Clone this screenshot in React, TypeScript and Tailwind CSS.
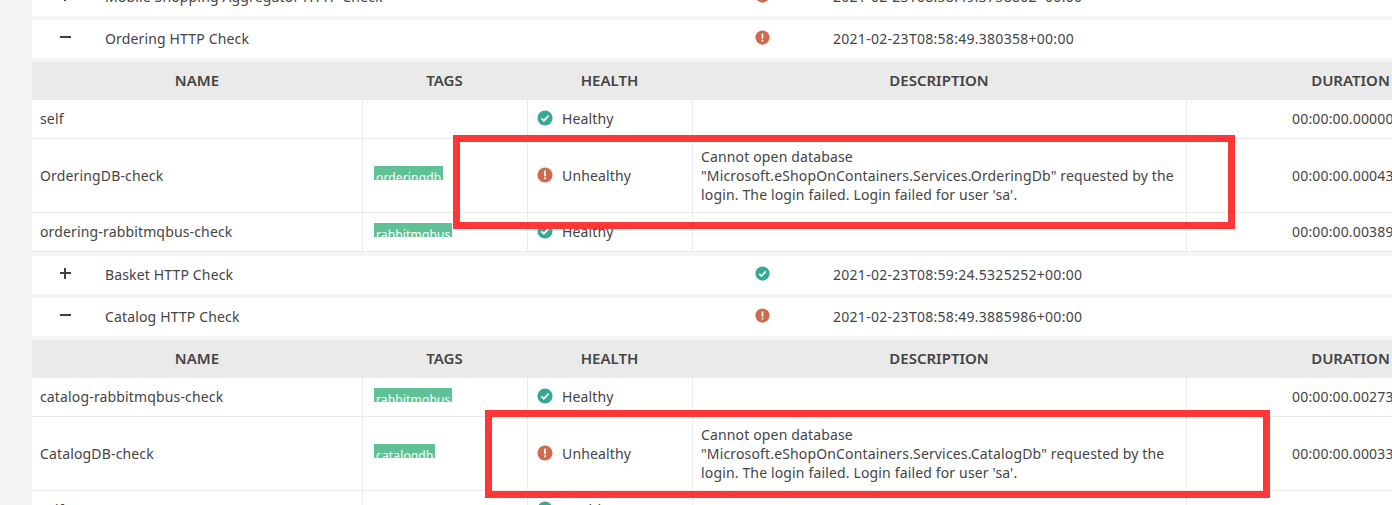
function CheckIcon({ className }: { className?: string }) {
  return (
    <svg viewBox="0 0 16 16" className={className}>
      <circle cx="8" cy="8" r="7.6" fill="#38a794" />
      <path d="M4.4 8.3l2.5 2.4 4.7-5" fill="none" stroke="#fff" strokeWidth="1.7" />
    </svg>
  )
}

function AlertIcon({ className }: { className?: string }) {
  return (
    <svg viewBox="0 0 16 16" className={className}>
      <circle cx="8" cy="8" r="7.6" fill="#cf6a4d" />
      <rect x="7.1" y="3.6" width="1.8" height="5.6" rx="0.5" fill="#fff" />
      <rect x="7.1" y="10.3" width="1.8" height="1.9" rx="0.5" fill="#fff" />
    </svg>
  )
}

type CheckRow = {
  name: string
  open: boolean
  ok: boolean
  date: string
  className?: string
}

function LivenessRow({ name, open, ok, date, className }: CheckRow) {
  return (
    <div className={`flex h-[38px] items-center bg-white pb-[2px] ${className ?? ''}`}>
      <span className="flex w-[66px] justify-center text-[#404040]">
        {open ? (
          <span className="mt-[-2px] h-[2px] w-[11px] bg-[#404040]" />
        ) : (
          <span className="relative mt-[-2px] h-[11px] w-[11px]">
            <span className="absolute left-0 top-[4.5px] h-[2px] w-[11px] bg-[#404040]" />
            <span className="absolute left-[4.5px] top-0 h-[11px] w-[2px] bg-[#404040]" />
          </span>
        )}
      </span>
      <span className="ml-[7px] w-[650px]">{name}</span>
      {ok ? <CheckIcon className="mt-[-2px] h-[15px] w-[15px]" /> : <AlertIcon className="mt-[-2px] h-[15px] w-[15px]" />}
      <span className="ml-[63px] tracking-[0.28px]">{date}</span>
    </div>
  )
}

function Tag({ label }: { label: string }) {
  return (
    <span className="mb-[5px] block h-[14px] w-fit overflow-hidden bg-[#5fc296] px-[2px] text-[12px] leading-[24px] text-white">
      {label}
    </span>
  )
}

type Detail = {
  name: string
  tag?: string
  ok: boolean
  description?: string[]
  duration: string
}

function DetailTable({ rows, className }: { rows: Detail[]; className?: string }) {
  return (
    <table className={`w-[1483px] table-fixed border-separate border-spacing-0 bg-white ${className ?? ''}`}>
      <thead>
        <tr className="h-[38px] bg-[#eaeaea] text-[15px] tracking-normal">
          <th className="w-[330px] pb-[2px] font-semibold">NAME</th>
          <th className="w-[165px] pb-[2px] font-semibold">TAGS</th>
          <th className="w-[165px] pb-[2px] font-semibold">HEALTH</th>
          <th className="w-[494px] pb-[2px] font-semibold">DESCRIPTION</th>
          <th className="pb-[2px] font-semibold">DURATION</th>
        </tr>
      </thead>
      <tbody>
        {rows.map((row) => (
          <tr key={row.name}>
            <td className={`h-[39px] border-b border-[#eaeaea] px-2 pt-0 ${row.description ? 'pb-0' : 'pb-[2px]'}`}>{row.name}</td>
            <td className="border-b border-l border-[#eaeaea] pl-[11px]">{row.tag && <Tag label={row.tag} />}</td>
            <td className={`border-b border-l border-[#eaeaea] pl-[9px] ${row.description ? 'pb-[1px]' : 'pb-[2px]'}`}>
              <div className="flex items-center gap-[9px]">
                {row.ok ? <CheckIcon className="h-[16px] w-[16px]" /> : <AlertIcon className="h-[16px] w-[16px]" />}
                <span>{row.ok ? 'Healthy' : 'Unhealthy'}</span>
              </div>
            </td>
            <td className="border-b border-l border-[#eaeaea] px-2 py-[8px] leading-[19px]">
              {row.description?.map((line) => (
                <div key={line} className="whitespace-nowrap">
                  {line}
                </div>
              ))}
            </td>
            <td className={`border-b border-l border-[#eaeaea] text-center ${row.description ? 'pb-0' : 'pb-[2px]'}`}>{row.duration}</td>
          </tr>
        ))}
      </tbody>
    </table>
  )
}

const orderingRows: Detail[] = [
  { name: 'self', ok: true, duration: '00:00:00.0000040' },
  {
    name: 'OrderingDB-check',
    tag: 'orderingdb',
    ok: false,
    description: [
      'Cannot open database',
      '"Microsoft.eShopOnContainers.Services.OrderingDb" requested by the',
      "login. The login failed. Login failed for user 'sa'.",
    ],
    duration: '00:00:00.0004321',
  },
  { name: 'ordering-rabbitmqbus-check', tag: 'rabbitmqbus', ok: true, duration: '00:00:00.0038912' },
]

const catalogRows: Detail[] = [
  { name: 'catalog-rabbitmqbus-check', tag: 'rabbitmqbus', ok: true, duration: '00:00:00.0027312' },
  {
    name: 'CatalogDB-check',
    tag: 'catalogdb',
    ok: false,
    description: [
      'Cannot open database',
      '"Microsoft.eShopOnContainers.Services.CatalogDb" requested by the',
      "login. The login failed. Login failed for user 'sa'.",
    ],
    duration: '00:00:00.0003321',
  },
  { name: 'self', ok: true, duration: '00:00:00.0000030' },
]

export default function App() {
  return (
    <div className='relative h-[505px] overflow-hidden bg-[#f5f5f5] font-["Noto_Sans",sans-serif] text-[14px] tracking-[0.15px] text-[#444444]'>
      <div className="ml-[32px] mt-[-22px] w-[1483px]">
        <LivenessRow name="Mobile Shopping Aggregator HTTP Check" open={false} ok={false} date="2021-02-23T08:58:49.3758802+00:00" />
        <LivenessRow name="Ordering HTTP Check" open ok={false} date="2021-02-23T08:58:49.380358+00:00" className="mt-[4px]" />
        <DetailTable rows={orderingRows} className="mt-[4px]" />
        <LivenessRow name="Basket HTTP Check" open={false} ok date="2021-02-23T08:59:24.5325252+00:00" className="mt-[4px]" />
        <LivenessRow name="Catalog HTTP Check" open ok={false} date="2021-02-23T08:58:49.3885986+00:00" className="mt-[4px]" />
        <DetailTable rows={catalogRows} className="mt-[4px]" />
      </div>
      {/* red annotation boxes drawn over the screenshot */}
      <div className="absolute left-[453px] top-[135px] h-[94px] w-[782px] border-[7px] border-[#ff3636]" />
      <div className="absolute left-[485px] top-[410px] h-[88px] w-[785px] border-[7px] border-[#ff3636]" />
    </div>
  )
}
